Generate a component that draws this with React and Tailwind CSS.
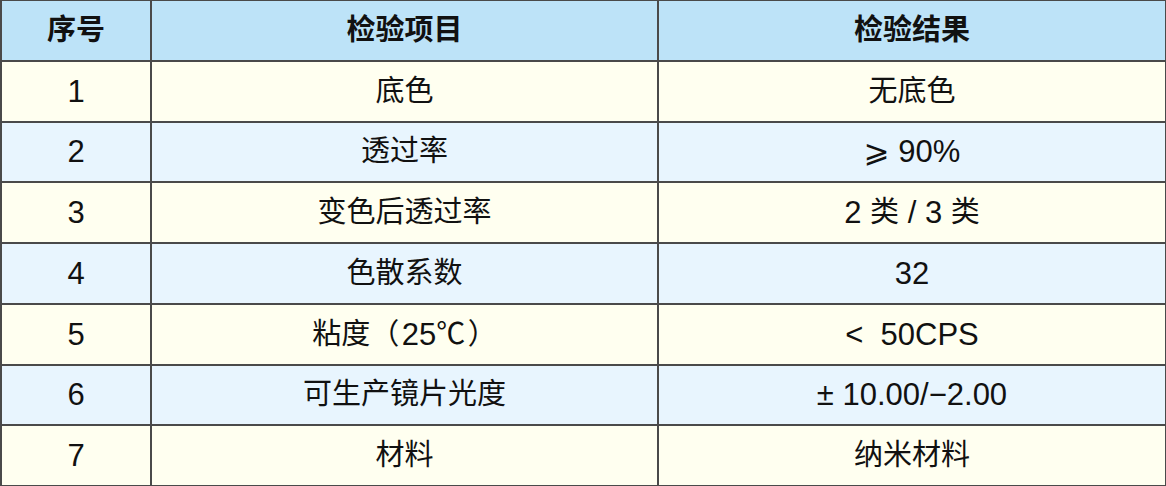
const rows = [
  ['1', '底色', '无底色'],
  ['2', '透过率', '⩾ 90%'],
  ['3', '变色后透过率', '2 类 / 3 类'],
  ['4', '色散系数', '32'],
  ['5', '粘度（\u200a25℃\u200a）', '<  50CPS'],
  ['6', '可生产镜片光度', '± 10.00/−2.00'],
  ['7', '材料', '纳米材料'],
]

// Latin runs are drawn larger than the CJK runs, like the reference
function Mixed({ text }) {
  const parts = text.split(/([\u3000-\u9fff\uff00-\uffef℃]+)/).filter(Boolean)
  return parts.map((p, i) =>
    /[\u3000-\u9fff\uff00-\uffef℃]/.test(p) ? (
      <span key={i} className="text-[29px]">{p}</span>
    ) : (
      <span key={i} className="text-[31px] whitespace-pre">{p}</span>
    )
  )
}

export default function App() {
  return (
    <div
      className="w-[1166px] h-[486px] bg-white"
      style={{ fontFamily: '"Liberation Sans", "Noto Sans CJK SC", "DejaVu Sans", sans-serif' }}
    >
      <div className="grid h-[486px] grid-cols-[148px_505px_1fr] grid-rows-8 gap-[2px] bg-[#4a4a4a] pt-[1px] pl-[2px] pr-[1px] pb-[1px] text-[29px] leading-none text-[#111]">
        <div className="flex items-center justify-center bg-[#bde3f8] font-bold">序号</div>
        <div className="flex items-center justify-center bg-[#bde3f8] font-bold">检验项目</div>
        <div className="flex items-center justify-center bg-[#bde3f8] font-bold">检验结果</div>
        {rows.map((r, i) => {
          const bg = i % 2 === 0 ? 'bg-[#fffff0]' : 'bg-[#e8f5fe]'
          return [
            <div key={i + 'a'} className={'flex items-center justify-center ' + bg}><Mixed text={r[0]} /></div>,
            <div key={i + 'b'} className={'flex items-center justify-center ' + bg}><Mixed text={r[1]} /></div>,
            <div key={i + 'c'} className={'flex items-center justify-center ' + bg}><Mixed text={r[2]} /></div>,
          ]
        })}
      </div>
    </div>
  )
}
